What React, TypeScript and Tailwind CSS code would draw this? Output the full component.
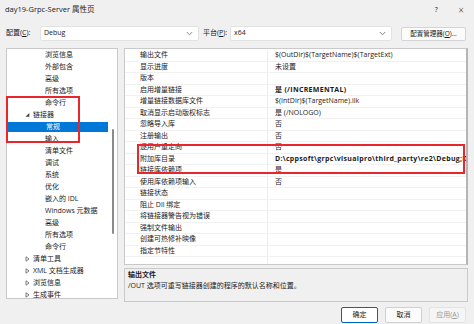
import React from "react";

const font = "font-['Open_Sans','Noto_Sans_CJK_SC',sans-serif]";

const Chevron = () => (
  <svg width="7" height="5" viewBox="0 0 7 5" className="shrink-0">
    <path d="M0.8 1 L3.5 3.8 L6.2 1" fill="none" stroke="#7a7a7a" strokeWidth="0.9" />
  </svg>
);

const ArrowRight = () => (
  <svg width="5" height="6" viewBox="0 0 5 6" className="shrink-0">
    <path d="M1 0.8 L4 3 L1 5.2 Z" fill="none" stroke="#606060" strokeWidth="0.8" />
  </svg>
);

const ArrowDown = () => (
  <svg width="5" height="6" viewBox="0 0 5 6" className="shrink-0">
    <path d="M4.3 1 L4.3 4.8 L0.5 4.8 Z" fill="#404040" />
  </svg>
);

type TreeItem = { label: string; level: 0 | 1; arrow?: "down" | "right"; selected?: boolean };

const tree: TreeItem[] = [
  { label: "浏览信息", level: 1 },
  { label: "外部包含", level: 1 },
  { label: "高级", level: 1 },
  { label: "所有选项", level: 1 },
  { label: "命令行", level: 1 },
  { label: "链接器", level: 0, arrow: "down" },
  { label: "常规", level: 1, selected: true },
  { label: "输入", level: 1 },
  { label: "清单文件", level: 1 },
  { label: "调试", level: 1 },
  { label: "系统", level: 1 },
  { label: "优化", level: 1 },
  { label: "嵌入的 IDL", level: 1 },
  { label: "Windows 元数据", level: 1 },
  { label: "高级", level: 1 },
  { label: "所有选项", level: 1 },
  { label: "命令行", level: 1 },
  { label: "清单工具", level: 0, arrow: "right" },
  { label: "XML 文档生成器", level: 0, arrow: "right" },
  { label: "浏览信息", level: 0, arrow: "right" },
  { label: "生成事件", level: 0, arrow: "right" },
];

type Row = { name: string; value: string; bold?: boolean };

const rows: Row[] = [
  { name: "输出文件", value: "$(OutDir)$(TargetName)$(TargetExt)" },
  { name: "显示进度", value: "未设置" },
  { name: "版本", value: "" },
  { name: "启用增量链接", value: "是 (/INCREMENTAL)", bold: true },
  { name: "增量链接数据库文件", value: "$(IntDir)$(TargetName).ilk" },
  { name: "取消显示启动版权标志", value: "是 (/NOLOGO)" },
  { name: "忽略导入库", value: "否" },
  { name: "注册输出", value: "否" },
  { name: "逐用户重定向", value: "否" },
  { name: "附加库目录", value: "D:\\cppsoft\\grpc\\visualpro\\third_party\\re2\\Debug;D:\\cppsoft", bold: true },
  { name: "链接库依赖项", value: "是" },
  { name: "使用库依赖项输入", value: "否" },
  { name: "链接状态", value: "" },
  { name: "阻止 Dll 绑定", value: "" },
  { name: "将链接器警告视为错误", value: "" },
  { name: "强制文件输出", value: "" },
  { name: "创建可热修补映像", value: "" },
  { name: "指定节特性", value: "" },
  { name: "", value: "" },
];

export default function App() {
  return (
    <div className={`relative w-[474px] h-[324px] overflow-hidden bg-[#f0f0f0] text-[#1a1a1a] ${font} flex flex-col`}>
      {/* title bar */}
      <div className="h-[20px] flex items-center pl-[5px] pr-[10px] text-[7.5px]">
        <span className="flex-1">day19-Grpc-Server 属性页</span>
        <span className="w-[10px] text-center text-[7px] mr-[17px]">?</span>
        <span className="text-[10px] leading-none font-light">×</span>
      </div>

      {/* config row */}
      <div className="h-[15px] mt-[6px] flex items-center pl-[6px] text-[7px]">
        <span className="w-[34px]">配置(<u>C</u>):</span>
        <div className="w-[159px] h-[15px] bg-white border border-[#e2e2e2] rounded-[2px] flex items-center pl-[3px] pr-[5px]">
          <span className="flex-1">Debug</span>
          <Chevron />
        </div>
        <span className="ml-[4px] w-[27px]">平台(<u>P</u>):</span>
        <div className="w-[162px] h-[15px] bg-white border border-[#e2e2e2] rounded-[2px] flex items-center pl-[3px] pr-[5px]">
          <span className="flex-1">x64</span>
          <Chevron />
        </div>
        <div className="ml-[9px] w-[65px] h-[14px] bg-[#fbfbfb] border border-[#d4d4d4] rounded-[2px] flex items-center justify-center text-[6.5px]">
          配置管理器(<u>O</u>)...
        </div>
      </div>

      {/* main */}
      <div className="mt-[7px] flex pl-[6px]">
        {/* tree */}
        <div className="relative w-[112px] h-[251px] bg-white border border-[#c9c9c9] overflow-hidden text-[7px]">
          {tree.map((t, i) => (
            <div key={i} className="h-[12px] flex items-center">
              {t.selected ? (
                <div className="ml-[1px] w-[100px] h-[10px] bg-[#0078d7] text-white flex items-center pl-[38px]">{t.label}</div>
              ) : t.level === 1 ? (
                <span className="pl-[38px]">{t.label}</span>
              ) : (
                <div className="flex items-center pl-[18px]">
                  <span className="w-[8px] flex items-center">{t.arrow === "down" ? <ArrowDown /> : <ArrowRight />}</span>
                  <span>{t.label}</span>
                </div>
              )}
            </div>
          ))}
          <div className="absolute left-[105px] top-[80px] w-[1.5px] h-[105px] bg-[#8a8a8a] rounded-full" />
        </div>

        {/* right side */}
        <div className="ml-[6px] w-[344px] flex flex-col">
          <div className="h-[217px] bg-white border border-[#c9c9c9] border-r-[2px] border-r-[#b5b5b5] overflow-hidden pt-[1.2px] text-[7px]">
            {rows.map((r, i) => (
              <div key={i} className="h-[11.53px] flex border-b border-[#f1f1f1]">
                <div className="w-[143px] pl-[15px] flex items-center border-r border-[#ececec] whitespace-nowrap overflow-hidden">{r.name}</div>
                <div className={`flex-1 pl-[7px] flex items-center whitespace-nowrap overflow-hidden ${r.bold ? "font-bold tracking-[0.3px]" : ""}`}>{r.value}</div>
              </div>
            ))}
          </div>
          <div className="mt-[3px] h-[34px] bg-[#f0f0f0] border border-[#c9c9c9] pl-[3px] pt-0 text-[7px] leading-[11px]">
            <div className="font-bold">输出文件</div>
            <div>/OUT 选项可重写链接器创建的程序的默认名称和位置。</div>
          </div>
        </div>
      </div>

      {/* buttons */}
      <div className="mt-[5px] flex justify-end pr-[8px] gap-[7px] text-[7px]">
        <div className="w-[37px] h-[16px] bg-white border border-[#0067c0] rounded-[2px] flex items-center justify-center">确定</div>
        <div className="w-[37px] h-[16px] bg-[#fbfbfb] border border-[#d0d0d0] rounded-[2px] flex items-center justify-center">取消</div>
        <div className="w-[37px] h-[16px] bg-[#f5f5f5] border border-[#e3e3e3] rounded-[2px] flex items-center justify-center text-[#9a9a9a]">应用(<u>A</u>)</div>
      </div>

      {/* red annotation boxes */}
      <div className="absolute left-[6px] top-[96px] w-[74px] h-[47px] border-2 border-[#e8262b]" />
      <div className="absolute left-[137px] top-[144px] w-[328px] h-[30px] border-2 border-[#e8262b]" />
    </div>
  );
}
